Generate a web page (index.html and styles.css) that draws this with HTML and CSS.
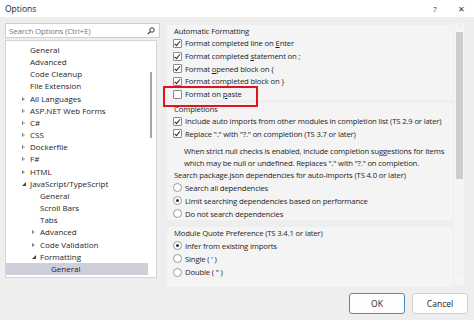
FILE: index.html
```html
<!DOCTYPE html>
<html lang="en">

<head>
    <meta charset="UTF-8">
    <title>Options</title>
    <link rel="stylesheet" href="styles.css">
</head>

<body>
    <div class="window">
        <div class="titlebar">
            <span class="title">Options</span>
            <span class="tb-btn">?</span>
            <span class="tb-btn close">&#x2715;</span>
        </div>

        <div class="main">
            <div class="left">
                <div class="search">
                    <span class="placeholder">Search Options (Ctrl+E)</span>
                    <svg class="search-icon" width="8" height="8" viewBox="0 0 8 8">
                        <circle cx="5" cy="3" r="2.2" fill="none" stroke="#333" stroke-width="1"/>
                        <line x1="3.4" y1="4.6" x2="0.8" y2="7.2" stroke="#333" stroke-width="1.2"/>
                    </svg>
                </div>
                <div class="tree">
                    <div class="tree-rows">
                        <div class="row d1">General</div>
                        <div class="row d1">Advanced</div>
                        <div class="row d1">Code Cleanup</div>
                        <div class="row d1">File Extension</div>
                        <div class="row d1"><span class="arrow"></span>All Languages</div>
                        <div class="row d1"><span class="arrow"></span>ASP.NET Web Forms</div>
                        <div class="row d1"><span class="arrow"></span>C#</div>
                        <div class="row d1"><span class="arrow"></span>CSS</div>
                        <div class="row d1"><span class="arrow"></span>Dockerfile</div>
                        <div class="row d1"><span class="arrow"></span>F#</div>
                        <div class="row d1"><span class="arrow"></span>HTML</div>
                        <div class="row d1"><span class="arrow open"></span>JavaScript/TypeScript</div>
                        <div class="row d2">General</div>
                        <div class="row d2">Scroll Bars</div>
                        <div class="row d2">Tabs</div>
                        <div class="row d2"><span class="arrow"></span>Advanced</div>
                        <div class="row d2"><span class="arrow"></span>Code Validation</div>
                        <div class="row d2"><span class="arrow open"></span>Formatting</div>
                        <div class="row d3 selected">General</div>
                    </div>
                    <div class="tree-scroll"><div class="tree-thumb"></div></div>
                </div>
            </div>

            <div class="right">
                <div class="options">
                    <div class="group">
                        <div class="header">Automatic Formatting</div>
                        <div class="opt"><span class="check on"></span><span>Format completed line on <u>E</u>nter</span></div>
                        <div class="opt"><span class="check on"></span><span>Format completed <u>s</u>tatement on ;</span></div>
                        <div class="opt"><span class="check on"></span><span>Format <u>o</u>pened block on {</span></div>
                        <div class="opt"><span class="check on"></span><span>Format completed block on }</span></div>
                        <div class="opt"><span class="check"></span><span>Format on <u>p</u>aste</span></div>
                    </div>
                    <div class="group">
                        <div class="header gap">Completions</div>
                        <div class="opt"><span class="check on"></span><span>Include auto imports from other modules in completion list (TS 2.9 or later)</span></div>
                        <div class="opt"><span class="check on"></span><span>Replace "." with "?." on completion (TS 3.7 or later)</span></div>
                        <p class="desc">When strict null checks is enabled, include completion suggestions for items which may be null or undefined. Replaces "." with "?." on completion.</p>
                    </div>
                    <div class="group">
                        <div class="header">Search package.json dependencies for auto-imports (TS 4.0 or later)</div>
                        <div class="opt mid"><span class="radio"></span><span>Search all dependencies</span></div>
                        <div class="opt mid"><span class="radio on"></span><span>Limit searching dependencies based on performance</span></div>
                        <div class="opt mid"><span class="radio"></span><span>Do not search dependencies</span></div>
                    </div>
                    <div class="group last">
                        <div class="header">Module Quote Preference (TS 3.4.1 or later)</div>
                        <div class="opt tall"><span class="radio on"></span><span>Infer from existing imports</span></div>
                        <div class="opt tall"><span class="radio"></span><span>Single ( ' )</span></div>
                        <div class="opt tall"><span class="radio"></span><span>Double ( " )</span></div>
                    </div>
                    <div class="highlight"></div>
                </div>
                <div class="vscroll">
                    <span class="sarrow">&#x02C4;</span>
                    <div class="vthumb"></div>
                    <span class="sarrow down">&#x02C5;</span>
                </div>
            </div>
        </div>

        <div class="footer">
            <button class="btn default">OK</button>
            <button class="btn">Cancel</button>
        </div>
    </div>
</body>

</html>
```

FILE: styles.css
```css
body {
    margin: 0;
    background: #ffffff;
    font-family: "Open Sans", "Noto Sans", sans-serif;
    font-size: 8px;
    color: #1e1e1e;
}

.window {
    width: 474px;
    height: 320px;
    background: #eeeeee;
    display: flex;
    flex-direction: column;
}

.titlebar {
    height: 17px;
    background: #ffffff;
    display: flex;
    align-items: center;
    padding: 0 0 0 5px;
}

.title {
    flex: 1;
    font-size: 8.5px;
}

.tb-btn {
    width: 26px;
    text-align: center;
    font-size: 8px;
    color: #333;
}

.tb-btn.close {
    margin-right: 0;
}

.main {
    display: flex;
    padding: 6px 0 0 5px;
    height: 263px;
}

.left {
    width: 155px;
    display: flex;
    flex-direction: column;
}

.search {
    height: 15px;
    background: #ffffff;
    border: 1px solid #cfcfcf;
    box-sizing: border-box;
    display: flex;
    align-items: center;
    padding: 0 4px 0 3px;
}

.placeholder {
    flex: 1;
    color: #7a7a7a;
    letter-spacing: -0.2px;
}

.tree {
    margin-top: 2px;
    width: 152px;
    height: 238px;
    background: #ffffff;
    border: 1px solid #d4d4d4;
    box-sizing: border-box;
    display: flex;
}

.tree-rows {
    flex: 1;
    padding-top: 3px;
}

.row {
    height: 12.17px;
    line-height: 12.17px;
    position: relative;
    white-space: nowrap;
}

.d1 {
    padding-left: 24px;
}

.d2 {
    padding-left: 34px;
}

.d3 {
    padding-left: 45px;
}

.selected {
    background: #cfcfdc;
}

.arrow {
    position: absolute;
    margin-left: -8px;
    top: 4px;
    width: 0;
    height: 0;
    border-left: 3px solid #777;
    border-top: 2.5px solid transparent;
    border-bottom: 2.5px solid transparent;
}

.arrow::after {
    content: "";
    position: absolute;
    left: -2.2px;
    top: -1.2px;
    border-left: 1.5px solid #fff;
    border-top: 1.2px solid transparent;
    border-bottom: 1.2px solid transparent;
}

.arrow.open {
    border: none;
    border-right: 4px solid #444;
    border-top: 4px solid transparent;
}

.arrow.open::after {
    display: none;
}

.tree-scroll {
    width: 8px;
}

.tree-thumb {
    width: 2px;
    height: 66px;
    margin: 31px 0 0 2px;
    background: #a6a6a6;
}

.right {
    display: flex;
    margin-left: 7px;
}

.options {
    width: 286px;
    padding-top: 2px;
    position: relative;
    font-size: 7.7px;
    letter-spacing: -0.15px;
}

.group {
    background: #f4f4f4;
}

.header {
    height: 12px;
    line-height: 12px;
    padding-left: 7px;
    white-space: nowrap;
}

.header.gap {
    margin-top: 2.5px;
}

.opt {
    height: 12.7px;
    display: flex;
    align-items: center;
    padding-left: 6px;
    white-space: nowrap;
}

.opt.mid {
    height: 13px;
}

.opt.tall {
    height: 13.1px;
}

.check,
.radio {
    width: 7px;
    height: 7px;
    border: 1px solid #8a8a8a;
    background: #fff;
    margin-right: 3px;
    position: relative;
    flex-shrink: 0;
}

.check {
    border-radius: 1px;
}

.check.on::after {
    content: "";
    position: absolute;
    left: 2px;
    top: 0;
    width: 2px;
    height: 4.5px;
    border-right: 1.2px solid #222;
    border-bottom: 1.2px solid #222;
    transform: rotate(40deg);
}

.radio {
    border-radius: 50%;
    border-color: #999;
}

.radio.on::after {
    content: "";
    position: absolute;
    left: 2px;
    top: 2px;
    width: 3px;
    height: 3px;
    border-radius: 50%;
    background: #333;
}

.desc {
    margin: 5px 0 0 17px;
    line-height: 12px;
    width: 262px;
}

.group.last {
    margin-top: 7px;
    padding-bottom: 8px;
}

.highlight {
    position: absolute;
    left: -4px;
    top: 63px;
    width: 91px;
    height: 17px;
    border: 2px solid #e1141e;
}

.vscroll {
    width: 10px;
    margin-left: 1px;
    height: 262px;
    background: #f4f4f4;
    display: flex;
    flex-direction: column;
    align-items: center;
}

.sarrow {
    font-size: 7px;
    color: #aaa;
    height: 9px;
    line-height: 10px;
}

.vthumb {
    width: 7px;
    height: 147px;
    background: #cdcdcd;
}

.sarrow.down {
    margin-top: auto;
    margin-bottom: 6px;
}

.footer {
    flex: 1;
    display: flex;
    justify-content: flex-end;
    align-items: flex-start;
    gap: 7px;
    padding: 7px 6px 0 0;
}

.btn {
    width: 56px;
    height: 21px;
    font-family: "Open Sans", "Noto Sans", sans-serif;
    font-size: 8.5px;
    color: #1e1e1e;
    background: #fdfdfd;
    border: 1px solid #d0d0d0;
    border-radius: 3px;
    padding: 0;
}

.btn.default {
    border-color: #4f86c6;
}
```
